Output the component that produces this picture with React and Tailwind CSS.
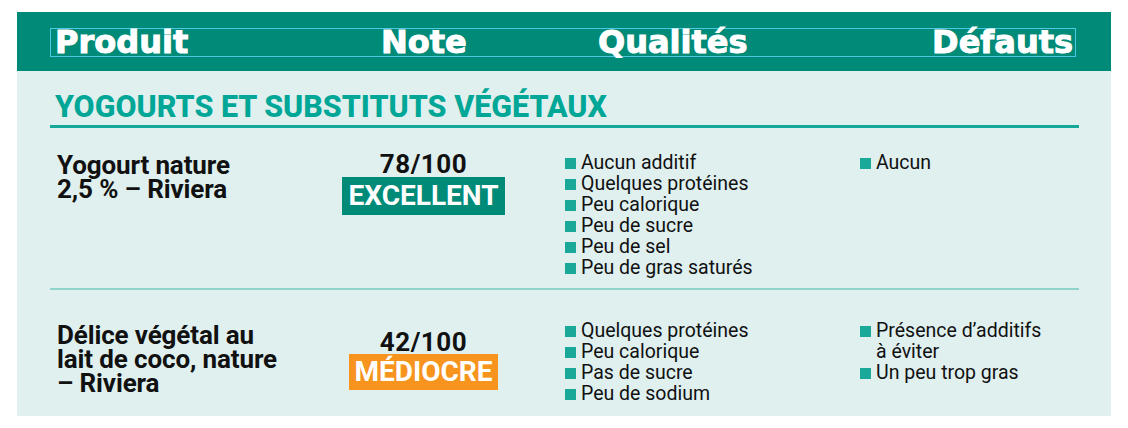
import React from "react";

const Bullet = ({ children }) => (
  <div className="flex items-start">
    <span className="mt-[6px] mr-[5px] h-[11px] w-[11px] shrink-0 bg-[#1aa898]" />
    <span>{children}</span>
  </div>
);

const Row = ({ product, score, label, badgeClass, qualities, defauts, rowClass, productClass, scoreClass }) => (
  <div className={`flex ${rowClass}`}>
    <div className={`w-[292px] pl-[7px] text-[26px] font-bold leading-[24px] tracking-[-0.005em] text-[#111] ${productClass}`}>
      {product}
    </div>
    <div className={`flex w-[163px] flex-col items-center ${scoreClass}`}>
      <div className="text-[26px] font-bold leading-[24px] tracking-[0.02em] text-[#111]">{score}</div>
      <div className={`flex items-center px-[6px] text-[28px] font-bold leading-none text-white ${badgeClass}`}>
        {label}
      </div>
    </div>
    <div className="ml-[60px] w-[295px] text-[19.5px] leading-[21px] text-[#111]">
      {qualities.map((q, i) => (
        <Bullet key={i}>{q}</Bullet>
      ))}
    </div>
    <div className="flex-1 text-[19.5px] leading-[21px] text-[#111]">
      {defauts.map((q, i) => (
        <Bullet key={i}>{q}</Bullet>
      ))}
    </div>
  </div>
);

export default function App() {
  return (
    <div className="h-[428px] w-[1128px] bg-white pt-[12px] pl-[17px]" style={{ fontFamily: "Roboto, 'Liberation Sans', sans-serif" }}>
      <div className="flex h-[404px] w-[1094px] flex-col bg-[#dff0ef]">
        <div className="flex h-[59px] shrink-0 items-start bg-[#008b78] pl-[33px] pt-[16px]">
          <div
            className="flex h-[29px] w-[1026px] border border-[#4fc6e4] text-[32px] font-bold leading-[27px] text-white [-webkit-text-stroke:1px_white]"
            style={{ fontFamily: "'DejaVu Sans', sans-serif" }}
          >
            <span className="w-[330px] pl-[4px]">Produit</span>
            <span className="w-[217px]">Note</span>
            <span>Qualités</span>
            <span className="ml-auto pr-[2px]">Défauts</span>
          </div>
        </div>
        <div className="pl-[33px] pr-[32px]">
          <div className="border-b-[3px] border-[#14a898] pb-[1px] pt-[19px]">
            <div className="pl-[5px] text-[30.5px] font-extrabold leading-[34px] text-[#00a696]">
              YOGOURTS ET SUBSTITUTS VÉGÉTAUX
            </div>
          </div>
          <Row
            rowClass="border-b-2 border-[#8fd4ca] pt-[24px] pb-[10px]"
            productClass="pt-[1px]"
            scoreClass=""
            product={
              <>
                Yogourt nature
                <br />
                2,5 % – Riviera
              </>
            }
            score="78/100"
            label="EXCELLENT"
            badgeClass="mt-[1px] h-[38px] bg-[#008b78]"
            qualities={[
              "Aucun additif",
              "Quelques protéines",
              "Peu calorique",
              "Peu de sucre",
              "Peu de sel",
              "Peu de gras saturés",
            ]}
            defauts={["Aucun"]}
          />
          <Row
            rowClass="pt-[30px]"
            productClass="pt-[3px]"
            scoreClass="pt-[10px]"
            product={
              <>
                Délice végétal au
                <br />
                lait de coco, nature
                <br />– Riviera
              </>
            }
            score="42/100"
            label="MÉDIOCRE"
            badgeClass="h-[36px] bg-[#f7941d]"
            qualities={["Quelques protéines", "Peu calorique", "Pas de sucre", "Peu de sodium"]}
            defauts={[
              <>
                Présence d’additifs
                <br />à éviter
              </>,
              "Un peu trop gras",
            ]}
          />
        </div>
      </div>
    </div>
  );
}
